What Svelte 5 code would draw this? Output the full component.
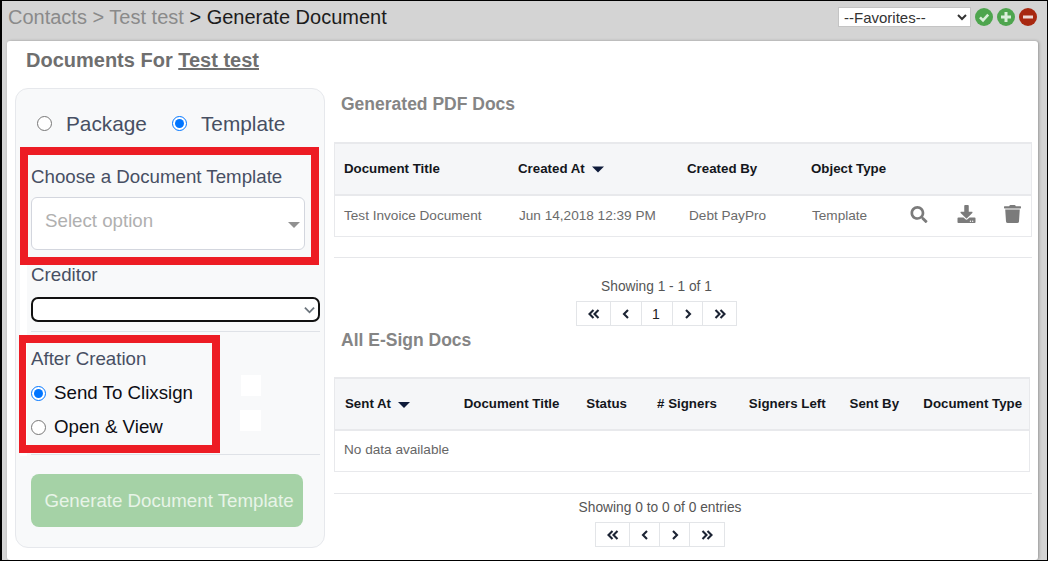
<script>
  const signHead = [
    { t: 'Sent At', w: 119, sort: true },
    { t: 'Document Title', w: 123 },
    { t: 'Status', w: 71 },
    { t: '# Signers', w: 92 },
    { t: 'Signers Left', w: 101 },
    { t: 'Sent By', w: 74 },
    { t: 'Document Type', w: 106 }
  ];
</script>

<div class="page">
  <header class="top">
    <div class="crumbs"><span class="muted">Contacts &gt; Test test</span> &gt; Generate Document</div>
    <div class="tools">
      <select class="fav"><option>--Favorites--</option></select>
      <svg class="ic" viewBox="0 0 18 18"><circle cx="9" cy="9" r="9" fill="#4ea54e"/><path d="M5 9.3l3 3 5.2-5.6" fill="none" stroke="#d9eed9" stroke-width="2.6"/></svg>
      <svg class="ic" viewBox="0 0 18 18"><circle cx="9" cy="9" r="9" fill="#4ea54e"/><path d="M9 4v10M4 9h10" fill="none" stroke="#d9eed9" stroke-width="3"/></svg>
      <svg class="ic" viewBox="0 0 18 18"><circle cx="9" cy="9" r="9" fill="#a82810"/><path d="M4 9h10" fill="none" stroke="#eed9d5" stroke-width="3"/></svg>
    </div>
  </header>

  <main class="card">
    <h1 class="title">Documents For <u>Test test</u></h1>
    <div class="cols">
      <aside class="panel">
        <div class="kinds">
          <label class="kind"><input type="radio" name="kind" /> <span>Package</span></label>
          <label class="kind"><input type="radio" name="kind" checked /> <span>Template</span></label>
        </div>
        <div class="lbl choose">Choose a Document Template</div>
        <div class="fake">
          <span>Select option</span>
          <i class="caret"></i>
        </div>
        <div class="lbl cred">Creditor</div>
        <div class="credbox">
          <select class="credsel"><option></option></select>
          <svg class="chev" viewBox="0 0 12 8"><path d="M1 1.5l5 5 5-5" fill="none" stroke="#6c757d" stroke-width="2"/></svg>
        </div>
        <div class="sep first"></div>
        <div class="lbl after">After Creation</div>
        <label class="opt o1"><input type="radio" name="after" checked /> <span>Send To Clixsign</span></label>
        <label class="opt"><input type="radio" name="after" /> <span>Open &amp; View</span></label>
        <div class="sep second"></div>
        <button class="gen">Generate Document Template</button>
      </aside>

      <section class="right">
        <h2 class="sub h1">Generated PDF Docs</h2>
        <div class="tbl">
          <div class="thead one">
            <div class="c1">Document Title</div>
            <div class="c2">Created At <i class="sort"></i></div>
            <div class="c3">Created By</div>
            <div class="c4">Object Type</div>
          </div>
          <div class="trow one">
            <div class="c1">Test Invoice Document</div>
            <div class="c2 d2">Jun 14,2018 12:39 PM</div>
            <div class="c3 d3">Debt PayPro</div>
            <div class="c4 d4">Template</div>
            <div class="acts">
              <svg class="a1" viewBox="0 0 512 512"><path d="M505 442.7L405.3 343c-4.5-4.5-10.6-7-17-7H372c27.6-35.3 44-79.7 44-128C416 93.1 322.9 0 208 0S0 93.1 0 208s93.1 208 208 208c48.3 0 92.7-16.4 128-44v16.3c0 6.4 2.5 12.5 7 17l99.7 99.7c9.4 9.4 24.6 9.4 33.9 0l28.3-28.3c9.4-9.4 9.4-24.6.1-34zM208 336c-70.7 0-128-57.2-128-128 0-70.7 57.2-128 128-128 70.7 0 128 57.2 128 128 0 70.7-57.2 128-128 128z"/></svg>
              <svg class="a2" viewBox="0 0 512 512"><path d="M216 0h80c13.3 0 24 10.7 24 24v168h87.7c17.8 0 26.7 21.5 14.1 34.1L269.7 378.3c-7.5 7.5-19.8 7.5-27.3 0L90.1 226.1c-12.6-12.6-3.7-34.1 14.1-34.1H192V24c0-13.3 10.7-24 24-24zm296 376v112c0 13.3-10.7 24-24 24H24c-13.3 0-24-10.7-24-24V376c0-13.3 10.7-24 24-24h146.7l49 49c20.1 20.1 52.5 20.1 72.6 0l49-49H488c13.3 0 24 10.7 24 24zm-124 88c0-11-9-20-20-20s-20 9-20 20 9 20 20 20 20-9 20-20zm64 0c0-11-9-20-20-20s-20 9-20 20 9 20 20 20 20-9 20-20z"/></svg>
              <svg class="a3" viewBox="0 0 448 512" preserveAspectRatio="none"><path d="M432 32H312l-9.4-18.7A24 24 0 0 0 281.1 0H166.8a23.72 23.72 0 0 0-21.4 13.3L136 32H16A16 16 0 0 0 0 48v32a16 16 0 0 0 16 16h416a16 16 0 0 0 16-16V48a16 16 0 0 0-16-16zM53.2 467a48 48 0 0 0 47.9 45h245.8a48 48 0 0 0 47.9-45L416 128H32z"/></svg>
            </div>
          </div>
        </div>
        <div class="rule r1"></div>
        <div class="showing s1">Showing 1 - 1 of 1</div>
        <div class="pager p1">
          <span class="pg w35"><svg viewBox="0 0 14 10"><path d="M6.5 1L2.5 5l4 4M11.5 1l-4 4 4 4"/></svg></span>
          <span class="pg w31"><svg viewBox="0 0 14 10"><path d="M9 1L5 5l4 4"/></svg></span>
          <span class="pg w31 num">1</span>
          <span class="pg w30"><svg viewBox="0 0 14 10"><path d="M5 1l4 4-4 4"/></svg></span>
          <span class="pg w35"><svg viewBox="0 0 14 10"><path d="M2.5 1l4 4-4 4M7.5 1l4 4-4 4"/></svg></span>
        </div>

        <h2 class="sub h2">All E-Sign Docs</h2>
        <div class="tbl two">
          <div class="thead flex">
            {#each signHead as h}
              <div style="width:{h.w}px">{h.t}{#if h.sort}<i class="sort"></i>{/if}</div>
            {/each}
          </div>
          <div class="trow empty">No data available</div>
        </div>
        <div class="rule r2"></div>
        <div class="showing s2">Showing 0 to 0 of 0 entries</div>
        <div class="pager p2">
          <span class="pg w35"><svg viewBox="0 0 14 10"><path d="M6.5 1L2.5 5l4 4M11.5 1l-4 4 4 4"/></svg></span>
          <span class="pg w30"><svg viewBox="0 0 14 10"><path d="M9 1L5 5l4 4"/></svg></span>
          <span class="pg w30"><svg viewBox="0 0 14 10"><path d="M5 1l4 4-4 4"/></svg></span>
          <span class="pg w36"><svg viewBox="0 0 14 10"><path d="M2.5 1l4 4-4 4M7.5 1l4 4-4 4"/></svg></span>
        </div>
      </section>
    </div>
  </main>

  <!-- annotation overlays drawn on top of the screenshot -->
  <div class="patch q0"></div>
  <div class="patch q1"></div>
  <div class="patch q2"></div>
  <div class="mark m1"></div>
  <div class="mark m2"></div>
</div>

<style>
  :global(body) { margin: 0; background: #fff; }
  .page {
    position: relative;
    width: 1048px;
    height: 561px;
    box-sizing: border-box;
    border: 2px solid #000;
    border-width: 1px 1px 1px 2px;
    background: #d4d4d4;
    font-family: "Liberation Sans", Arial, sans-serif;
    overflow: hidden;
  }
  .top {
    height: 40px;
    display: flex;
    align-items: flex-start;
    justify-content: space-between;
    padding-left: 6px;
    padding-right: 10px;
  }
  .crumbs { font-size: 20px; line-height: 32px; color: #1c1c1c; }
  .muted { color: #8a8a8a; }
  .tools { display: flex; align-items: center; gap: 4px; padding-top: 6px; }
  .fav {
    width: 133px; height: 20px;
    font: 15px "Liberation Sans", sans-serif;
    color: #333; background: #fff;
    border: 1px solid #c4c4c4; border-radius: 0; padding: 0 0 0 1px;
  }
  .ic { width: 18px; height: 18px; display: block; margin-top: -1px; }
  .card {
    margin-left: 5px;
    width: 1031px;
    height: 519px;
    background: #fff;
    border-radius: 3px;
    box-shadow: 1px 0 3px rgba(0,0,0,.3);
  }
  .title {
    margin: 0;
    padding: 7px 0 0 19px;
    height: 40px;
    box-sizing: border-box;
    font-size: 20px;
    line-height: 24px;
    font-weight: 700;
    color: #6f6f6f;
  }
  .cols { display: flex; padding-left: 8px; }
  .panel {
    width: 310px;
    height: 460px;
    box-sizing: border-box;
    margin-top: 7px;
    background: #f8f9fa;
    border: 1px solid #e6e8ec;
    border-radius: 13px;
    padding: 0 0 0 15px;
    flex: none;
  }
  .kinds { display: flex; padding: 23px 0 0 6px; height: 52px; box-sizing: border-box; }
  .kind { display: flex; align-items: center; height: 24px; font-size: 20.8px; color: #474f63; }
  .kind input { width: 15px; height: 15px; margin: 0 14px 2px 0; accent-color: #0075ff; }
  .kind + .kind { margin-left: 25px; }
  .lbl { font-size: 18.72px; line-height: 24px; color: #474f63; }
  .choose { margin-top: 24px; }
  .fake {
    position: relative;
    width: 274px;
    height: 53px;
    margin-top: 8px;
    box-sizing: border-box;
    background: #fff;
    border: 1px solid #d3d6de;
    border-radius: 6px;
    padding: 11px 13px;
    font-size: 18.72px;
    line-height: 24px;
    color: #b0b0b0;
  }
  .caret {
    position: absolute; right: 4px; top: 24px; width: 0; height: 0;
    border-left: 6px solid transparent; border-right: 6px solid transparent;
    border-top: 6px solid #919191;
  }
  .cred { margin-top: 13px; }
  .credbox { position: relative; width: 289px; height: 25px; margin-top: 10px; }
  .credsel {
    width: 100%; height: 100%; box-sizing: border-box; appearance: none;
    background: #fff; border: 2px solid #111; border-radius: 7px; display: block;
  }
  .chev { position: absolute; right: 5px; top: 9px; width: 11px; height: 8px; }
  .sep { width: 289px; height: 1px; background: #dfe2e7; }
  .first { margin-top: 9px; }
  .after { margin-top: 15px; }
  .opt { display: flex; align-items: center; height: 34px; font-size: 18.72px; color: #0d0d14; }
  .o1 { margin-top: 5px; }
  .opt input { width: 15px; height: 15px; margin: 0 8px 0 0; accent-color: #0075ff; }
  .second { margin-top: 10px; }
  .gen {
    display: block;
    width: 272px;
    height: 53px;
    margin-top: 19px;
    border: 0;
    border-radius: 8px;
    background: #a5d2a6;
    color: #e8f4e8;
    font: 18.72px "Liberation Sans", sans-serif;
    padding: 0 0 0 4px;
  }
  .right { width: 698px; margin-left: 9px; flex: none; }
  .sub { margin: 0; font-size: 17.5px; line-height: 22px; font-weight: 700; color: #858585; padding-left: 7px; }
  .h1 { margin-top: 12px; }
  .tbl { margin-top: 27px; border: 1px solid #e8e9ec; box-sizing: border-box; }
  .thead {
    height: 48px;
    padding-bottom: 2px;
    background: #f5f6f8;
    border-top: 1px solid #e8e9ec;
    border-bottom: 2px solid #e8e9ec;
    box-sizing: content-box;
    display: flex; align-items: center;
    font-size: 13.3px; font-weight: 700; color: #14161c;
  }
  .thead.one { position: relative; }
  .c1, .c2, .c3, .c4 { position: absolute; top: 24px; transform: translateY(-50%); white-space: nowrap; }
  .trow .c1, .trow .c2, .trow .c3, .trow .c4 { top: 19px; }
  .c1 { left: 9px; } .c2 { left: 183px; } .c3 { left: 352px; } .c4 { left: 476px; }
  .d2 { left: 184px; } .d3 { left: 354px; } .d4 { left: 477px; }
  .sort {
    display: inline-block; width: 0; height: 0; margin-left: 7px; vertical-align: 0;
    border-left: 6px solid transparent; border-right: 6px solid transparent; border-top: 6px solid #0e1b3a;
  }
  .c2 .sort { margin-left: 4px; }
  .trow { height: 40px; font-size: 13.6px; color: #6b6b6b; }
  .trow.one { position: relative; }
  .acts { position: absolute; left: 575px; top: 9px; display: flex; align-items: flex-start; }
  .acts svg { fill: #7b7b7b; display: block; }
  .a1 { width: 18px; height: 17px; margin-top: 1px; }
  .a2 { width: 19px; height: 18px; margin-left: 29px; }
  .a3 { width: 17px; height: 18px; margin-left: 28px; }
  .rule { height: 1px; background: #e6e7ea; }
  .r1 { margin-top: 20px; }
  .showing { text-align: center; font-size: 13.75px; line-height: 18px; color: #555; }
  .s1 { margin-top: 20px; width: 645px; }
  .pager { display: flex; height: 25px; box-sizing: border-box; }
  .p1 { margin: 5px 0 0 243px; }
  .pg {
    display: flex; align-items: center; justify-content: center;
    box-sizing: border-box; height: 100%;
    border: 1px solid #e3e5e8; margin-left: -1px; background: #fff;
    font-size: 14px; color: #222;
  }
  .num { padding-right: 2px; }
  .pg svg { width: 14px; height: 10px; fill: none; stroke: #1b2333; stroke-width: 2.1; }
  .w36 { width: 36px; } .w35 { width: 35px; } .w31 { width: 32px; } .w30 { width: 31px; }
  .h2 { margin-top: 3px; }
  .two { width: 696px; margin-top: 26px; }
  .flex { padding-left: 10px; height: 49px; padding-bottom: 1px; }
  .empty { padding: 11px 9px; box-sizing: border-box; color: #666; line-height: 16px; }
  .r2 { margin-top: 21px; }
  .s2 { margin-top: 5px; width: 652px; }
  .p2 { margin: 5px 0 0 262px; }
  .mark { position: absolute; box-sizing: border-box; border: 8px solid #ed1c24; }
  .m1 { left: 18px; top: 146px; width: 299px; height: 118px; }
  .m2 { left: 17px; top: 334px; width: 201px; height: 118px; border-left-width: 7px; }
  .patch { position: absolute; background: #fff; }
  .q0 { left: 18px; top: 263px; width: 7px; height: 192px; }
  .q1 { left: 239px; top: 374px; width: 20px; height: 21px; }
  .q2 { left: 238px; top: 409px; width: 21px; height: 21px; }
</style>
